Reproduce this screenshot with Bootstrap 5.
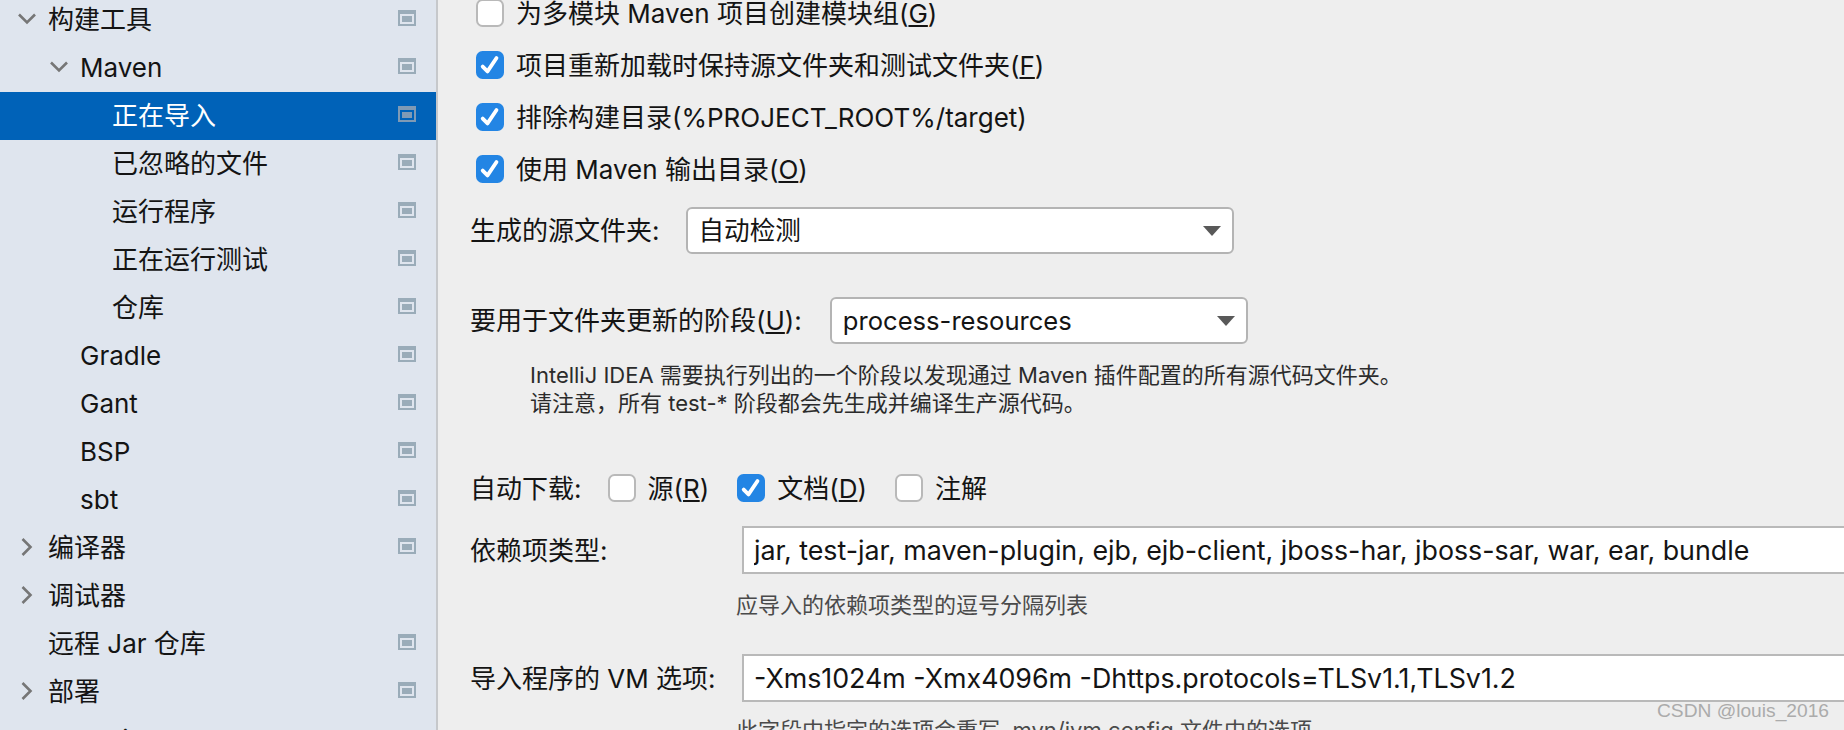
<!doctype html>
<html lang="zh">
<head>
<meta charset="utf-8">
<title>Maven 正在导入</title>
<link rel="stylesheet" href="https://cdn.jsdelivr.net/npm/bootstrap@5.3.0/dist/css/bootstrap.min.css">
<style>
html,body{height:730px;overflow:hidden;background:#eeeeee}
body{font-family:Inter,"Noto Sans CJK SC",sans-serif;color:#141414;font-size:26px}
.shell{height:730px;overflow:hidden}
.side{width:438px;flex:none;background:#dfe5ee;border-right:2px solid #c6c8cb;height:730px;overflow:hidden}
.side .list-group{margin-top:-4px;--bs-list-group-bg:transparent;--bs-list-group-border-width:0;border-radius:0}
.tree-row{height:48px;padding:0 20px 0 0;border:0;background:transparent;color:#141414;font-size:26px;line-height:46px;white-space:nowrap}
.tree-row.active{background:#0062b8;color:#fff}
.lv0{padding-left:48px}.lv1{padding-left:80px}.lv2{padding-left:112px}
.chev{position:absolute;top:11px;width:24px;height:24px;fill:none;stroke:#767676;stroke-width:2.6}
.lv0 .chev{left:15px}.lv1 .chev{left:47px}
.cfg{width:18px;height:16px;flex:none;margin-bottom:4px}
.main{flex:1 1 0;min-width:0;overflow:hidden;padding-left:32px;margin-top:-13px}
.check-row{height:52px;padding-left:6px}
.cb{width:28px;height:28px;margin:0;border:2px solid #b9b9b9;border-radius:5px;flex:none;background-color:#fff}
.cb:checked{background-color:#2385e4;border-color:#2385e4;background-size:28px 28px;background-position:center;
background-image:url("data:image/svg+xml,%3Csvg xmlns='http://www.w3.org/2000/svg' viewBox='0 0 28 28'%3E%3Cpath fill='none' stroke='%23fff' stroke-width='3.8' stroke-linecap='round' stroke-linejoin='round' d='M6.7 15.6l4.8 4.8 9-13.4'/%3E%3C/svg%3E")}
.cb-label{margin-left:12px;white-space:nowrap}
.flabel{white-space:nowrap}
.pick{height:47px;border:2px solid #b4b4b4;border-radius:6px;padding:0 0 0 11px;font-size:25.6px;color:#141414;line-height:43px;
background-image:url("data:image/svg+xml,%3Csvg xmlns='http://www.w3.org/2000/svg' viewBox='0 0 18 10'%3E%3Cpath fill='%23595959' d='M0 0h18L9 10z'/%3E%3C/svg%3E");
background-size:18px 10px;background-position:right 11px center;font-family:inherit}
.pick1{width:548px;margin-left:26px}
.pick2{width:418px;margin-left:28px}
.gap1{margin-top:12px}.gap2{margin-top:43px}
.note{padding-left:60px;margin-top:17px;font-size:22px;line-height:28px;color:#2b2b2b;white-space:nowrap}
.dl-row{margin-top:57px;height:28px;padding-left:0}
.dl-row .cb-first{margin-left:26px}
.dl-row .cb-next{margin-left:28px}
.field{height:48px;border:2px solid #b9b9b9;border-radius:0;padding:0 10px;font-size:26.8px;color:#141414;background:#fff;font-family:inherit;width:1200px;flex:none}
.lab-fixed{width:272px;flex:none}
.f1{margin-top:24px}.f2{margin-top:35px}
.hint{padding-left:266px;margin-top:17px;font-size:22px;line-height:28px;color:#4a4a4a;white-space:nowrap}
.hint2{margin-top:14px}
.mark-w{position:absolute;right:15px;top:698px;font-family:"Liberation Sans",sans-serif;font-size:19.2px;color:#ababab;line-height:26px}
</style>
</head>
<body>
<div class="shell d-flex position-relative">
<aside class="side">
<div class="list-group list-group-flush">
<div class="list-group-item tree-row lv0 d-flex justify-content-between align-items-center position-relative"><svg class="chev" viewBox="0 0 24 24"><path d="M4 7.5l8 8 8-8"/></svg><span>构建工具</span><svg class="cfg" viewBox="0 0 18 16"><path fill="#9aacb9" d="M0 0h18v16H0zM2 4v10h14V4z"/><path fill="#9aacb9" d="M4 6h10v6H4z"/></svg></div>
<div class="list-group-item tree-row lv1 d-flex justify-content-between align-items-center position-relative"><svg class="chev" viewBox="0 0 24 24"><path d="M4 7.5l8 8 8-8"/></svg><span>Maven</span><svg class="cfg" viewBox="0 0 18 16"><path fill="#9aacb9" d="M0 0h18v16H0zM2 4v10h14V4z"/><path fill="#9aacb9" d="M4 6h10v6H4z"/></svg></div>
<div class="list-group-item tree-row lv2 active d-flex justify-content-between align-items-center position-relative"><span>正在导入</span><svg class="cfg" viewBox="0 0 18 16"><path fill="#7f9ab5" d="M0 0h18v16H0zM2 4v10h14V4z"/><path fill="#7f9ab5" d="M4 6h10v6H4z"/></svg></div>
<div class="list-group-item tree-row lv2 d-flex justify-content-between align-items-center position-relative"><span>已忽略的文件</span><svg class="cfg" viewBox="0 0 18 16"><path fill="#9aacb9" d="M0 0h18v16H0zM2 4v10h14V4z"/><path fill="#9aacb9" d="M4 6h10v6H4z"/></svg></div>
<div class="list-group-item tree-row lv2 d-flex justify-content-between align-items-center position-relative"><span>运行程序</span><svg class="cfg" viewBox="0 0 18 16"><path fill="#9aacb9" d="M0 0h18v16H0zM2 4v10h14V4z"/><path fill="#9aacb9" d="M4 6h10v6H4z"/></svg></div>
<div class="list-group-item tree-row lv2 d-flex justify-content-between align-items-center position-relative"><span>正在运行测试</span><svg class="cfg" viewBox="0 0 18 16"><path fill="#9aacb9" d="M0 0h18v16H0zM2 4v10h14V4z"/><path fill="#9aacb9" d="M4 6h10v6H4z"/></svg></div>
<div class="list-group-item tree-row lv2 d-flex justify-content-between align-items-center position-relative"><span>仓库</span><svg class="cfg" viewBox="0 0 18 16"><path fill="#9aacb9" d="M0 0h18v16H0zM2 4v10h14V4z"/><path fill="#9aacb9" d="M4 6h10v6H4z"/></svg></div>
<div class="list-group-item tree-row lv1 d-flex justify-content-between align-items-center position-relative"><span>Gradle</span><svg class="cfg" viewBox="0 0 18 16"><path fill="#9aacb9" d="M0 0h18v16H0zM2 4v10h14V4z"/><path fill="#9aacb9" d="M4 6h10v6H4z"/></svg></div>
<div class="list-group-item tree-row lv1 d-flex justify-content-between align-items-center position-relative"><span>Gant</span><svg class="cfg" viewBox="0 0 18 16"><path fill="#9aacb9" d="M0 0h18v16H0zM2 4v10h14V4z"/><path fill="#9aacb9" d="M4 6h10v6H4z"/></svg></div>
<div class="list-group-item tree-row lv1 d-flex justify-content-between align-items-center position-relative"><span>BSP</span><svg class="cfg" viewBox="0 0 18 16"><path fill="#9aacb9" d="M0 0h18v16H0zM2 4v10h14V4z"/><path fill="#9aacb9" d="M4 6h10v6H4z"/></svg></div>
<div class="list-group-item tree-row lv1 d-flex justify-content-between align-items-center position-relative"><span>sbt</span><svg class="cfg" viewBox="0 0 18 16"><path fill="#9aacb9" d="M0 0h18v16H0zM2 4v10h14V4z"/><path fill="#9aacb9" d="M4 6h10v6H4z"/></svg></div>
<div class="list-group-item tree-row lv0 d-flex justify-content-between align-items-center position-relative"><svg class="chev" viewBox="0 0 24 24"><path d="M7.5 4l8 8-8 8"/></svg><span>编译器</span><svg class="cfg" viewBox="0 0 18 16"><path fill="#9aacb9" d="M0 0h18v16H0zM2 4v10h14V4z"/><path fill="#9aacb9" d="M4 6h10v6H4z"/></svg></div>
<div class="list-group-item tree-row lv0 d-flex justify-content-between align-items-center position-relative"><svg class="chev" viewBox="0 0 24 24"><path d="M7.5 4l8 8-8 8"/></svg><span>调试器</span></div>
<div class="list-group-item tree-row lv0 d-flex justify-content-between align-items-center position-relative"><span>远程 Jar 仓库</span><svg class="cfg" viewBox="0 0 18 16"><path fill="#9aacb9" d="M0 0h18v16H0zM2 4v10h14V4z"/><path fill="#9aacb9" d="M4 6h10v6H4z"/></svg></div>
<div class="list-group-item tree-row lv0 d-flex justify-content-between align-items-center position-relative"><svg class="chev" viewBox="0 0 24 24"><path d="M7.5 4l8 8-8 8"/></svg><span>部署</span><svg class="cfg" viewBox="0 0 18 16"><path fill="#9aacb9" d="M0 0h18v16H0zM2 4v10h14V4z"/><path fill="#9aacb9" d="M4 6h10v6H4z"/></svg></div>
<div class="list-group-item tree-row lv0 d-flex justify-content-between align-items-center position-relative"><span>Android</span></div>
</div>
</aside>
<main class="main">
<div class="check-row d-flex align-items-center"><input class="form-check-input cb" type="checkbox" id="c1"><label class="cb-label" for="c1">为多模块 Maven 项目创建模块组(<u>G</u>)</label></div>
<div class="check-row d-flex align-items-center"><input class="form-check-input cb" type="checkbox" id="c2" checked><label class="cb-label" for="c2">项目重新加载时保持源文件夹和测试文件夹(<u>F</u>)</label></div>
<div class="check-row d-flex align-items-center"><input class="form-check-input cb" type="checkbox" id="c3" checked><label class="cb-label" for="c3">排除构建目录(%PROJECT_ROOT%/target)</label></div>
<div class="check-row d-flex align-items-center"><input class="form-check-input cb" type="checkbox" id="c4" checked><label class="cb-label" for="c4">使用 Maven 输出目录(<u>O</u>)</label></div>
<div class="d-flex align-items-center gap1"><label class="flabel">生成的源文件夹:</label><select class="form-select pick pick1"><option>自动检测</option></select></div>
<div class="d-flex align-items-center gap2"><label class="flabel">要用于文件夹更新的阶段(<u>U</u>):</label><select class="form-select pick pick2"><option>process-resources</option></select></div>
<div class="note">IntelliJ IDEA 需要执行列出的一个阶段以发现通过 Maven 插件配置的所有源代码文件夹。<br>请注意，所有 test-* 阶段都会先生成并编译生产源代码。</div>
<div class="dl-row d-flex align-items-center"><span class="flabel">自动下载:</span><input class="form-check-input cb cb-first" type="checkbox" id="d1"><label class="cb-label" for="d1">源(<u>R</u>)</label><input class="form-check-input cb cb-next" type="checkbox" id="d2" checked><label class="cb-label" for="d2">文档(<u>D</u>)</label><input class="form-check-input cb cb-next" type="checkbox" id="d3"><label class="cb-label" for="d3">注解</label></div>
<div class="d-flex align-items-center f1"><label class="flabel lab-fixed">依赖项类型:</label><input class="form-control field" value="jar, test-jar, maven-plugin, ejb, ejb-client, jboss-har, jboss-sar, war, ear, bundle"></div>
<div class="hint">应导入的依赖项类型的逗号分隔列表</div>
<div class="d-flex align-items-center f2"><label class="flabel lab-fixed">导入程序的 VM 选项:</label><input class="form-control field" value="-Xms1024m -Xmx4096m -Dhttps.protocols=TLSv1.1,TLSv1.2"></div>
<div class="hint hint2">此字段中指定的选项会重写 .mvn/jvm.config 文件中的选项</div>
</main>
<div class="mark-w">CSDN @louis_2016</div>
</div>
<script src="https://cdn.jsdelivr.net/npm/bootstrap@5.3.0/dist/js/bootstrap.bundle.min.js"></script>
</body>
</html>
